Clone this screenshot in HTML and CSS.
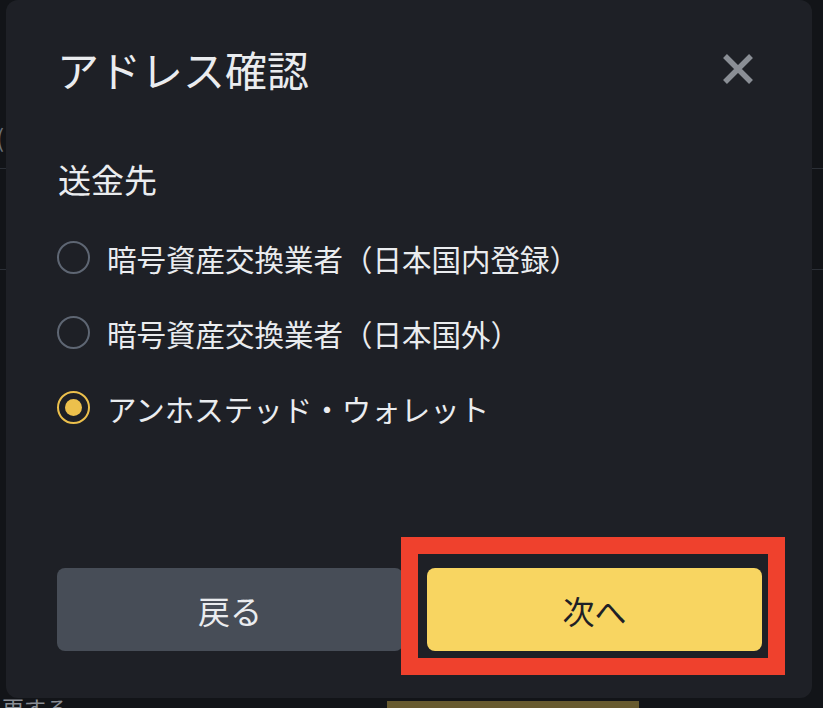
FILE: index.html
```html
<!DOCTYPE html>
<html lang="ja">
<head>
  <meta charset="UTF-8" />
  <meta name="viewport" content="width=device-width, initial-scale=1.0"/>
  <title>アドレス確認</title>
  <link rel="stylesheet" href="styles.css">
</head>
<body>
  <div class="page">
    <div class="page-row">(</div>
    <div class="page-table"></div>
    <div class="page-footer">
      <span class="page-link">更する</span>
      <span class="page-btn"></span>
    </div>
  </div>

  <div class="modal">
    <div class="modal-head">
      <h2>アドレス確認</h2>
      <button class="close" aria-label="閉じる">
        <svg width="32" height="32" viewBox="0 0 32 32">
          <path d="M3 3 L29 29 M29 3 L3 29" stroke="#8a8e95" stroke-width="5.5" fill="none"/>
        </svg>
      </button>
    </div>

    <p class="label">送金先</p>

    <div class="options">
      <label class="option"><span class="radio"></span>暗号資産交換業者（日本国内登録）</label>
      <label class="option"><span class="radio"></span>暗号資産交換業者（日本国外）</label>
      <label class="option"><span class="radio checked"></span>アンホステッド・ウォレット</label>
    </div>

    <div class="actions">
      <button class="btn back">戻る</button>
      <button class="btn next">次へ</button>
    </div>
  </div>

  <div class="highlight"></div>
</body>
</html>
```

FILE: styles.css
```css
body {
  margin: 0;
  width: 823px;
  height: 708px;
  overflow: hidden;
  background: #121418;
  font-family: "Noto Sans CJK JP", "Noto Sans", sans-serif;
  color: #eaecef;
}

.page {
  height: 708px;
  display: flex;
  flex-direction: column;
}

.page-row {
  height: 168px;
  padding-top: 122px;
  box-sizing: border-box;
  margin-left: -4px;
  font-size: 24px;
  line-height: 30px;
  color: #6b7078;
}

.page-table {
  height: 100px;
  border-top: 1px solid #2b2f36;
  border-bottom: 1px solid #2b2f36;
}

.page-footer {
  margin-top: auto;
  height: 14px;
  display: flex;
  align-items: flex-start;
}

.page-link {
  width: 385px;
  margin-left: 2px;
  font-size: 22px;
  line-height: 26px;
  color: #8a8e95;
}

.page-btn {
  margin-top: 7px;
  width: 252px;
  height: 10px;
  background: #675a2f;
}

.modal {
  position: fixed;
  left: 6px;
  top: 0;
  width: 806px;
  height: 698px;
  box-sizing: border-box;
  padding: 0 50px 47px 51px;
  background: #1e2026;
  border-radius: 12px;
  display: flex;
  flex-direction: column;
}

.modal-head {
  margin-top: 38px;
  height: 60px;
  display: flex;
  align-items: center;
  justify-content: space-between;
}

.modal-head h2 {
  margin: 0;
  font-size: 42px;
  font-weight: 400;
  color: #eaecef;
}

.close {
  background: none;
  border: none;
  padding: 0;
  margin-right: 8px;
  margin-top: 2px;
  width: 32px;
  height: 32px;
  cursor: pointer;
}

.label {
  margin: 61px 0 0;
  padding-left: 1px;
  font-size: 33px;
  line-height: 40px;
}

.options {
  margin-top: 21px;
  display: flex;
  flex-direction: column;
}

.option {
  height: 75px;
  display: flex;
  align-items: center;
  gap: 17px;
  font-size: 29.5px;
  color: #eaecef;
}

.radio {
  width: 33px;
  height: 33px;
  box-sizing: border-box;
  border: 2px solid #5e6673;
  border-radius: 50%;
  display: flex;
  align-items: center;
  justify-content: center;
}

.radio.checked {
  border-color: #ecc04c;
}

.radio.checked::after {
  content: "";
  width: 17px;
  height: 17px;
  border-radius: 50%;
  background: #ecc04c;
}

.actions {
  margin-top: auto;
  display: flex;
  gap: 24px;
}

.btn {
  height: 83px;
  border: none;
  border-radius: 8px;
  font-family: inherit;
  font-size: 32px;
  cursor: pointer;
}

.back {
  flex: 1;
  background: #474d57;
  color: #eaecef;
}

.next {
  width: 335px;
  background: #f8d561;
  color: #1e2026;
}

.highlight {
  position: fixed;
  left: 401px;
  top: 537px;
  width: 384px;
  height: 138px;
  box-sizing: border-box;
  border: 17px solid #ef412d;
}
```
